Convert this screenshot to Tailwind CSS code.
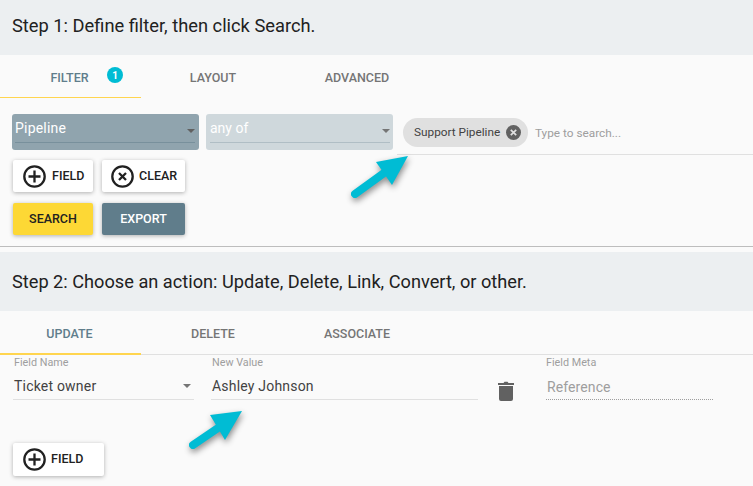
<!DOCTYPE html>
<html lang="en">
<head>
    <meta charset="UTF-8">
    <title>Bulk edit</title>
    <script src="https://cdn.jsdelivr.net/npm/@tailwindcss/browser@4"></script>
</head>
<body class="relative w-[753px] h-[486px] overflow-hidden bg-[#fafafa] font-['Roboto',sans-serif] text-[#212121]">
    <!-- step 1 -->
    <div class="h-[55px] bg-[#eceff1] pl-3 pt-[13px] text-[18.3px] leading-[26px]">Step 1: Define filter, then click Search.</div>
    <div class="flex h-[43px] text-[12.5px] font-medium text-[#757575]">
        <div class="relative flex w-[141px] justify-center border-b border-[#ffd54f] pt-[15px] leading-[15px] text-[#607d8b]">
            <span class="-ml-[2px]">FILTER</span>
            <span class="absolute left-[107px] top-[12px] flex h-4 w-4 items-center justify-center rounded-full bg-[#00bcd4] text-[10px] font-bold text-white">1</span>
        </div>
        <div class="flex w-[144px] justify-center pt-[15px] leading-[15px]">LAYOUT</div>
        <div class="flex w-[144px] justify-center pt-[15px] leading-[15px]">ADVANCED</div>
    </div>
    <div class="flex pl-3 pt-[16px] h-[62px]">
        <div class="relative h-9 w-[187px] rounded-[3px] bg-[#90a4ae] pl-[3px] pt-[4px] text-[14px] leading-5 tracking-[0.2px] text-white">
            Pipeline
            <span class="absolute left-[175px] top-[15px] h-0 w-0 border-x-4 border-t-[4px] border-x-transparent border-t-[#616161]"></span>
            <span class="absolute bottom-[7px] left-[3px] right-1 h-px bg-[#78909c]"></span>
        </div>
        <div class="relative ml-[7px] h-9 w-[187px] rounded-[3px] bg-[#cfd8dc] pl-[4px] pt-[4px] text-[14px] leading-5 text-white">
            any of
            <span class="absolute left-[176px] top-[15px] h-0 w-0 border-x-4 border-t-[4px] border-x-transparent border-t-[#757575]"></span>
            <span class="absolute bottom-[7px] left-1 right-[3px] h-px bg-[#b0bec5]"></span>
        </div>
        <div class="ml-[4px] flex h-[41px] flex-1 items-start border-b border-[#e0e0e0] pl-[6px] pt-[4px]">
            <div class="flex h-[29px] w-[125px] items-center rounded-full bg-[#e0e0e0] pl-[11px] text-[11.8px] text-[#424242]">
                Support Pipeline
                <svg class="ml-[6px] shrink-0" width="15" height="15" viewBox="0 0 15 15"><circle cx="7.5" cy="7.5" r="7.5" fill="#616161"/><path d="M4.8 4.8l5.4 5.4M10.2 4.8l-5.4 5.4" stroke="#e0e0e0" stroke-width="1.7"/></svg>
            </div>
            <span class="ml-[7px] mt-[7px] text-[11.8px] leading-[16px] text-[#9e9e9e]">Type to search...</span>
        </div>
    </div>
    <div class="ml-[13px] flex gap-[9px] text-[12.5px] font-medium">
        <button class="flex h-[32px] w-[80px] items-center rounded-[2px] bg-white pl-[10px] shadow-[0_1px_4px_rgba(0,0,0,0.3)]">
            <svg width="23" height="23" viewBox="0 0 23 23" fill="none" stroke="#212121" stroke-width="2.3"><circle cx="11.5" cy="11.5" r="10.2"/><path d="M11.5 5.5v12M5.5 11.5h12"/></svg>
            <span class="ml-[6px]">FIELD</span>
        </button>
        <button class="flex h-[32px] w-[83px] items-center rounded-[2px] bg-white pl-[9px] shadow-[0_1px_4px_rgba(0,0,0,0.3)]">
            <svg width="23" height="23" viewBox="0 0 23 23" fill="none" stroke="#212121" stroke-width="2.3"><circle cx="11.5" cy="11.5" r="10.2"/><path d="M8 8l7 7M15 8l-7 7"/></svg>
            <span class="ml-[5px]">CLEAR</span>
        </button>
    </div>
    <div class="ml-[13px] mt-[11px] flex gap-[9px] text-[12.5px] font-medium">
        <button class="h-[32px] w-[80px] rounded-[2px] bg-[#fdd835] shadow-[0_1px_4px_rgba(0,0,0,0.3)]">SEARCH</button>
        <button class="h-[32px] w-[83px] rounded-[2px] bg-[#607d8b] text-white shadow-[0_1px_4px_rgba(0,0,0,0.3)]">EXPORT</button>
    </div>
    <div class="mt-[11px] h-[6px] border-t border-[#bdbdbd] bg-[#fafafa]"></div>
    <!-- step 2 -->
    <div class="h-[59px] bg-[#eceff1] pl-3 pt-[17px] text-[18.2px] leading-[26px]">Step 2: Choose an action: Update, Delete, Link, Convert, or other.</div>
    <div class="flex h-[44px] border-b border-[#e0e0e0] text-[12.5px] font-medium text-[#757575]">
        <div class="flex h-[44px] w-[141px] justify-center border-b-2 border-[#ffd54f] pt-[15px] leading-[15px] text-[#607d8b]"><span class="-mr-[1px] -ml-[3px]">UPDATE</span></div>
        <div class="flex w-[144px] justify-center pt-[15px] leading-[15px]">DELETE</div>
        <div class="flex w-[144px] justify-center pt-[15px] leading-[15px]">ASSOCIATE</div>
    </div>
    <div class="flex h-[88px] pt-[2px]">
        <div class="ml-[13px] w-[181px]">
            <div class="pl-[1px] text-[10.8px] leading-[12px] text-[#9e9e9e]">Field Name</div>
            <div class="relative mt-[5px] h-[26px] border-b border-[#e0e0e0] pl-[1px] text-[14px] leading-[24px] tracking-[0.2px] text-[#424242]">
                Ticket owner
                <span class="absolute right-[3px] top-[10px] h-0 w-0 border-x-4 border-t-[4px] border-x-transparent border-t-[#757575]"></span>
            </div>
        </div>
        <div class="ml-[17px] w-[267px]">
            <div class="pl-[1px] text-[10.8px] leading-[12px] text-[#9e9e9e]">New Value</div>
            <div class="mt-[5px] h-[26px] border-b border-[#e0e0e0] pl-[1px] text-[14px] leading-[24px] tracking-[0.2px] text-[#424242]">Ashley Johnson</div>
        </div>
        <svg class="ml-[20px] mt-[24px]" width="16" height="20" viewBox="0 0 16 20" fill="#616161"><path d="M0 2h5.5L6.5 .8h3l1 1.2H16v2H0zM1 5h14v13a2 2 0 0 1-2 2H3a2 2 0 0 1-2-2z"/></svg>
        <div class="ml-[32px] w-[167px]">
            <div class="text-[10.8px] leading-[12px] text-[#9e9e9e]">Field Meta</div>
            <div class="mt-[5px] h-[26px] border-b border-dotted border-[#9e9e9e] pl-[1px] pt-[1px] text-[14px] leading-[24px] tracking-[0.1px] text-[#9e9e9e]">Reference</div>
        </div>
    </div>
    <button class="ml-[13px] flex h-[33px] w-[91px] items-center rounded-[2px] bg-white pl-[10px] text-[12.5px] font-medium shadow-[0_1px_4px_rgba(0,0,0,0.3)]">
        <svg width="23" height="23" viewBox="0 0 23 23" fill="none" stroke="#212121" stroke-width="2.3"><circle cx="11.5" cy="11.5" r="10.2"/><path d="M11.5 5.5v12M5.5 11.5h12"/></svg>
        <span class="ml-[5px] -mt-[1px]">FIELD</span>
    </button>
    <!-- callout arrows -->
    <svg class="absolute left-[348px] top-[153px] drop-shadow-[1px_3px_3px_rgba(0,0,0,0.45)]" width="62" height="50" viewBox="0 0 62 50"><path d="M7 41L36 20" stroke="#00bcd4" stroke-width="8" stroke-linecap="round"/><path d="M60 3L28 9L44 32Z" fill="#00bcd4"/></svg>
    <svg class="absolute left-[185px] top-[408px] drop-shadow-[1px_3px_3px_rgba(0,0,0,0.45)]" width="60" height="46" viewBox="0 0 60 46"><path d="M8 37L33 20" stroke="#00bcd4" stroke-width="8" stroke-linecap="round"/><path d="M57 3L25 7L40 32Z" fill="#00bcd4"/></svg>
</body>
</html>
